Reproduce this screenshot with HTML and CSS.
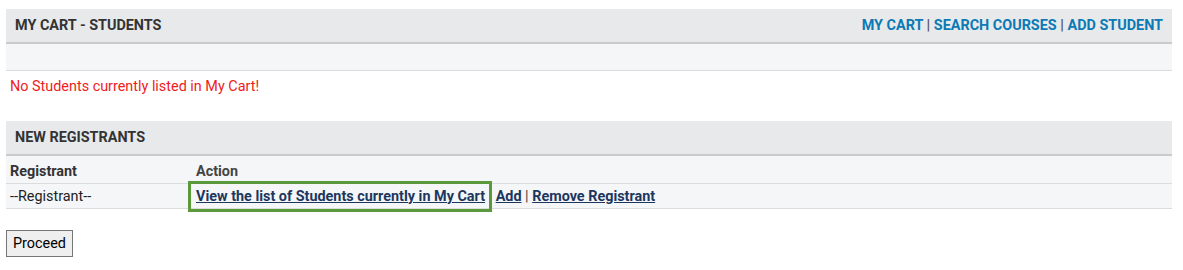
FILE: index.html
```html
<!DOCTYPE html>
<html>
<head>
<meta charset="utf-8">
<link rel="stylesheet" href="styles.css">
</head>
<body>
<div class="page">
  <div class="panel-head">
    <span class="title">MY CART - STUDENTS</span>
    <span class="nav"><a href="#">MY CART</a> | <a href="#">SEARCH COURSES</a> | <a href="#">ADD STUDENT</a></span>
  </div>
  <div class="empty-row"></div>
  <div class="msg">No Students currently listed in My Cart!</div>
  <div class="panel-head second">
    <span class="title">NEW REGISTRANTS</span>
  </div>
  <div class="trow thead">
    <div class="c1">Registrant</div>
    <div class="c2">Action</div>
  </div>
  <div class="trow tbody">
    <div class="c1">--Registrant--</div>
    <div class="c2"><span class="hl"><a class="act" href="#">View the list of Students currently in My Cart</a></span> <a class="act" href="#">Add</a> | <a class="act" href="#">Remove Registrant</a></div>
  </div>
  <button class="btn">Proceed</button>
</div>
</body>
</html>
```
FILE: styles.css
```css
body { margin: 0; font-family: Roboto, "Liberation Sans", sans-serif; background: #fff; }
.page { padding: 9px 11px 0 6px; }
.panel-head { display: flex; justify-content: space-between; align-items: center; height: 33px; background: #e8e9eb; border-bottom: 2px solid #c9cacc; padding: 0 9px 0 9px; box-sizing: content-box; }
.panel-head .title { font-size: 14.4px; font-weight: 700; color: #333; }
.nav { font-size: 14.4px; font-weight: 700; color: #555; }
.nav a { color: #0b7ab5; text-decoration: none; }
.empty-row { height: 26px; background: #f5f6f8; border-bottom: 1px solid #dcdcdc; }
.msg { color: #ee1c1c; font-size: 14.4px; padding: 7px 4px 0; height: 50px; box-sizing: border-box; }
.second { height: 33px; }
.trow { display: flex; align-items: center; background: #f5f6f8; border-bottom: 1px solid #dcdcdc; font-size: 14.4px; color: #222; }
.thead { height: 27px; font-weight: 700; color: #333; }
.thead .c1, .thead .c2 { padding-top: 3px; }
.tbody { height: 24px; }
.c1 { width: 186px; padding-left: 4px; }
.c2 { flex: 1; color: #444; }
.act { color: #1c365e; font-weight: 700; text-decoration: underline; }
.hl { display: inline-block; border: 3px solid #5a9a3d; padding: 4px 4px 4px 5px; margin-left: -8px; line-height: 17px; }
.btn { display: block; margin-top: 21px; font-family: Roboto, "Liberation Sans", sans-serif; font-size: 14.4px; padding: 2px 6px; border: 1px solid #767676; background: #efefef; color: #000; height: 27px; border-radius: 0; }
```
